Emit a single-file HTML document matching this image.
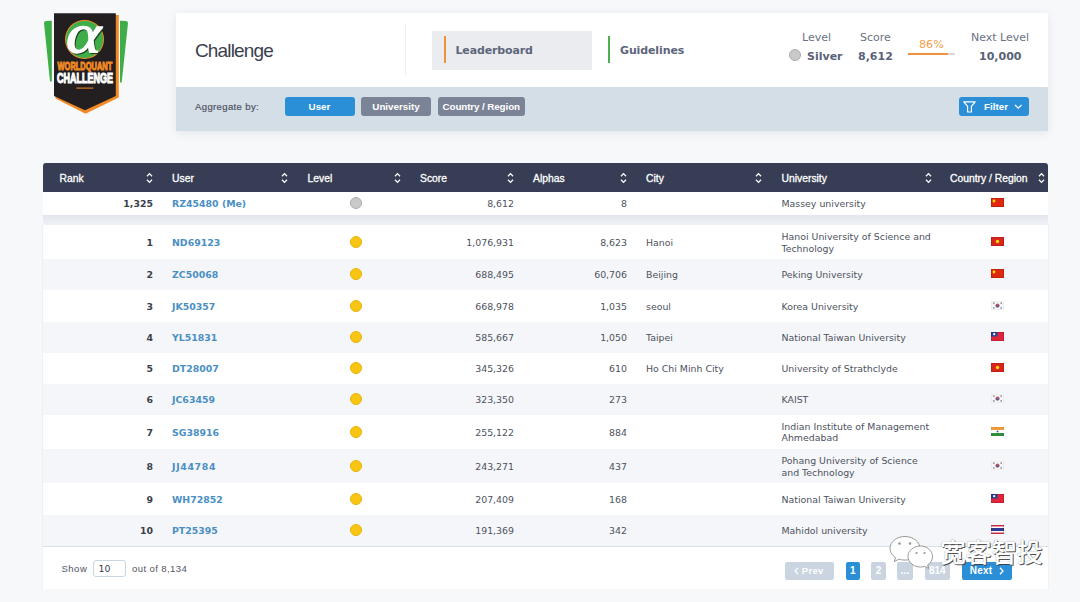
<!DOCTYPE html>
<html lang="en">
<head>
<meta charset="utf-8">
<title>WorldQuant Challenge Leaderboard</title>
<style>
*{box-sizing:border-box;margin:0;padding:0}
html,body{width:1080px;height:602px;overflow:hidden}
body{background:#f7f8fa;position:relative;font-family:"DejaVu Sans","Liberation Sans",sans-serif;color:#4a4f5c}
.abs{position:absolute;white-space:nowrap}
.din{font-family:"Liberation Sans",sans-serif}
/* header card */
#card{position:absolute;left:176px;top:13px;width:872px;height:118px;background:#fff;box-shadow:0 2px 9px rgba(60,80,110,.10)}
#cardbar{position:absolute;left:0;top:74px;width:872px;height:44px;background:#d4dee7}
#title{left:19px;top:26px;font-size:19px;letter-spacing:-.85px;color:#3a3f4d;line-height:24px}
#vdiv{position:absolute;left:229px;top:11px;width:1px;height:52px;background:#eceef1}
#tab1{position:absolute;left:256px;top:18px;width:160px;height:39px;background:#eaecf0}
.bar{position:absolute;width:2px;height:27px;top:23px}
.tabtxt{font-size:11px;font-weight:700;color:#5d667b;top:31.4px;line-height:14px}
.btn{position:absolute;height:19px;top:84px;border-radius:3px;color:#fff;font-family:"Liberation Sans",sans-serif;font-weight:700;font-size:9.800px;line-height:20.800px;text-align:center;white-space:nowrap}
.gray{background:#7b8396}
.blue{background:#2a8fd6}
.lbl{font-size:11px;color:#6a7182;line-height:14px;margin-top:1px}
.val{font-size:11px;font-weight:700;color:#5a6277;line-height:14px;margin-top:1px}
/* table */
#thead{position:absolute;left:43px;top:163px;width:1005px;height:28.5px;background:#373d54;border-radius:3px 3px 0 0}
.th{position:absolute;top:8.8px;-webkit-text-stroke:.3px #fff;font-family:"Liberation Sans",sans-serif;font-size:10.35px;color:#fff;line-height:14px;white-space:nowrap}
.sort{position:absolute;top:8.8px}
#merow{position:absolute;left:43px;top:191.5px;width:1005px;height:23.5px;background:#fff}
#gap{position:absolute;left:43px;top:215px;width:1005px;height:10px;background:linear-gradient(#e2e6ee,#eff2f6)}
#tbody{position:absolute;left:43px;top:225px;width:1005px;height:364px;background:#fff}
.row{position:absolute;left:43px;width:1005px;background:#fff;box-shadow:-1px 0 0 #eceff3,1px 0 0 #eceff3}
.row.odd{background:#f5f6f9}
.c{position:absolute;font-size:9.4px;line-height:12px;white-space:nowrap;color:#4d525e}
.rank{right:895px;font-weight:700;color:#3b3f4a;text-align:right}
.user{left:129px;font-weight:700;color:#4a8fc4}
.score{right:534px}
.alphas{right:421px}
.city{left:603px}
.uni{left:738.5px;line-height:11.8px}
.dot{position:absolute;left:307px;width:12px;height:12px;border-radius:50%;background:#f9c513;border:1px solid #e9b40a}
.flag{position:absolute;left:948px}
#foot{position:absolute;left:43px;top:545.5px;width:1005px;height:43px;background:#fff;border-top:1px solid #d5e2ee;box-shadow:-1px 0 0 #f0f2f5,1px 0 0 #f0f2f5}
.pg{position:absolute;top:562px;height:18px;border-radius:2px;color:#fff;font-family:"Liberation Sans",sans-serif;font-weight:700;font-size:10px;line-height:18px;text-align:center;white-space:nowrap}
</style>
</head>
<body>
<!-- logo -->
<svg class="abs" style="left:40px;top:8px" width="92" height="110" viewBox="40 8 92 110">
  <path d="M44 23 Q44.200 21.200 46 21 L51.800 20.800 L51.800 81.500 L50 81.500 Z" fill="#3fae49"/>
  <path d="M128 23 Q127.800 21.200 126 21 L120 20.800 L120 82.500 L121.700 82.500 Z" fill="#3fae49"/>
  <path d="M55.500 15 L118.800 15 L118.800 97.500 L85.500 113.800 L55.500 98.500 Z" fill="#f08a24"/>
  <path d="M54 13.200 L115.800 13.200 L115.800 96 L85 110.300 L54 96 Z" fill="#231f20"/>
  <circle cx="84.500" cy="39.400" r="19.500" fill="#e8902c"/>
  <circle cx="84.500" cy="39.400" r="18.500" fill="#3fae49"/>
  <g transform="translate(84.100 39.700) scale(1.34 1.1) translate(-84.3 -41)">
    <text x="84.600" y="53.100" text-anchor="middle" font-family="'Liberation Serif','DejaVu Serif',serif" font-style="italic" font-weight="400" font-size="50" fill="#1d3b1f" stroke="#1d3b1f" stroke-width="1.2">α</text>
    <text x="84" y="52.500" text-anchor="middle" font-family="'Liberation Serif','DejaVu Serif',serif" font-style="italic" font-weight="400" font-size="50" fill="#fff" stroke="#fff" stroke-width="1.2">α</text>
  </g>
  <text x="57.600" y="70.400" font-family="'Liberation Sans',sans-serif" font-weight="700" font-size="10.800" fill="#f08a24" stroke="#f08a24" stroke-width="1" textLength="54.600" lengthAdjust="spacingAndGlyphs">WORLDQUANT</text>
  <text x="57.100" y="83" font-family="'Liberation Sans',sans-serif" font-weight="700" font-size="14.600" fill="#fff" stroke="#fff" stroke-width="1.200" textLength="55.800" lengthAdjust="spacingAndGlyphs">CHALLENGE</text>
  <rect x="76.400" y="87.600" width="17" height="1" fill="#f08a24"/>
</svg>
<!-- header card -->
<div id="card">
  <div id="cardbar"></div>
  <div id="title" class="abs din">Challenge</div>
  <div id="vdiv"></div>
  <div id="tab1"></div>
  <div class="bar" style="left:268px;background:#f0923a"></div>
  <div class="abs tabtxt" style="left:279.5px;letter-spacing:-.15px">Leaderboard</div>
  <div class="bar" style="left:432px;background:#4caf50"></div>
  <div class="abs tabtxt" style="left:444px;letter-spacing:-.12px">Guidelines</div>

  <div class="abs lbl" style="left:626px;top:17px">Level</div>
  <div class="abs" style="left:613px;top:36px;width:12px;height:12px;border-radius:50%;background:#c9c9c9;border:1px solid #adadad"></div>
  <div class="abs val" style="left:631px;top:36px">Silver</div>
  <div class="abs lbl" style="left:684px;top:17px">Score</div>
  <div class="abs val" style="left:682px;top:36px">8,612</div>
  <div class="abs" style="left:743px;top:25px;font-size:11.200px;color:#f0a04b;line-height:13px">86%</div>
  <div class="abs" style="left:732px;top:40px;width:47px;height:1.500px;background:#d9d9d9"></div>
  <div class="abs" style="left:732px;top:40px;width:40px;height:1.500px;background:#f0923a"></div>
  <div class="abs lbl" style="left:795px;top:17px">Next Level</div>
  <div class="abs val" style="left:803px;top:36px">10,000</div>

  <div class="abs din" style="left:19px;top:87.900px;font-size:9.5px;letter-spacing:.38px;color:#4f5564;-webkit-text-stroke:.2px #4f5564;line-height:12px">Aggregate by:</div>
  <div class="btn blue" style="left:108.5px;width:70px">User</div>
  <div class="btn gray" style="left:185px;width:70px">University</div>
  <div class="btn gray" style="left:261.5px;width:87.5px;letter-spacing:-.1px">Country / Region</div>
  <div class="btn blue" style="left:783px;width:70px;padding-left:4px">Filter
    <svg style="position:absolute;left:54.800px;top:6.800px" width="8.500" height="6" viewBox="0 0 8.500 6"><path d="M1 1l3.250 3.200 3.250-3.200" fill="none" stroke="#fff" stroke-width="1.2"/></svg>
    <svg style="position:absolute;left:4.300px;top:3.700px" width="13" height="12" viewBox="0 0 13 12"><path d="M.8 .8h11.400L8.400 5.300V11H4.600V5.300z" fill="none" stroke="#fff" stroke-width="1.150" stroke-linejoin="round"/></svg>
  </div>
</div>

<!-- table -->
<div id="tbody"></div>
<div class="row" style="top:225px;height:33.69999999999999px"><span class="c rank" style="top:11.8px">1</span><span class="c user" style="top:11.8px">ND69123</span><i class="dot" style="top:10.8px"></i><span class="c score" style="top:11.8px">1,076,931</span><span class="c alphas" style="top:11.8px">8,623</span><span class="c city" style="top:11.8px">Hanoi</span><span class="c uni" style="top:5.8px">Hanoi University of Science and<br>Technology</span><svg class="flag" style="top:11.8px" width="13" height="9" viewBox="0 0 13 9"><rect width="13" height="9" fill="#da251d"/><circle cx="6.5" cy="4.5" r="1.7" fill="#ffdf00"/><rect x=".4" y=".4" width="12.2" height="8.2" fill="none" stroke="#000" stroke-opacity=".16" stroke-width=".8"/></svg></div>
<div class="row odd" style="top:258.7px;height:31.30000000000001px"><span class="c rank" style="top:10.6px">2</span><span class="c user" style="top:10.6px">ZC50068</span><i class="dot" style="top:9.6px"></i><span class="c score" style="top:10.6px">688,495</span><span class="c alphas" style="top:10.6px">60,706</span><span class="c city" style="top:10.6px">Beijing</span><span class="c uni" style="top:10.6px">Peking University</span><svg class="flag" style="top:10.6px" width="13" height="9" viewBox="0 0 13 9"><rect width="13" height="9" fill="#de2910"/><circle cx="3" cy="3" r="1.4" fill="#ffde00"/><rect x=".4" y=".4" width="12.2" height="8.2" fill="none" stroke="#000" stroke-opacity=".16" stroke-width=".8"/></svg></div>
<div class="row" style="top:290px;height:31.600000000000023px"><span class="c rank" style="top:10.7px">3</span><span class="c user" style="top:10.7px">JK50357</span><i class="dot" style="top:9.7px"></i><span class="c score" style="top:10.7px">668,978</span><span class="c alphas" style="top:10.7px">1,035</span><span class="c city" style="top:10.7px">seoul</span><span class="c uni" style="top:10.7px">Korea University</span><svg class="flag" style="top:10.7px" width="13" height="9" viewBox="0 0 13 9"><rect width="13" height="9" fill="#f7f7f9"/><circle cx="6.5" cy="4.5" r="2" fill="#c8506a"/><path d="M4.5 4.5a2 2 0 0 0 4 0z" fill="#50609a"/><rect x="2" y="1.5" width="1.6" height="1.2" fill="#777"/><rect x="9.4" y="1.5" width="1.6" height="1.2" fill="#777"/><rect x="2" y="6.3" width="1.6" height="1.2" fill="#777"/><rect x="9.4" y="6.3" width="1.6" height="1.2" fill="#777"/><rect x=".4" y=".4" width="12.2" height="8.2" fill="none" stroke="#000" stroke-opacity=".05" stroke-width=".8"/></svg></div>
<div class="row odd" style="top:321.6px;height:31.099999999999966px"><span class="c rank" style="top:10.4px">4</span><span class="c user" style="top:10.4px">YL51831</span><i class="dot" style="top:9.4px"></i><span class="c score" style="top:10.4px">585,667</span><span class="c alphas" style="top:10.4px">1,050</span><span class="c city" style="top:10.4px">Taipei</span><span class="c uni" style="top:10.4px">National Taiwan University</span><svg class="flag" style="top:10.4px" width="13" height="9" viewBox="0 0 13 9"><rect width="13" height="9" fill="#e0243a"/><rect width="6.5" height="4.5" fill="#2a3f9d"/><circle cx="3.2" cy="2.2" r="1.1" fill="#fff"/><rect x=".4" y=".4" width="12.2" height="8.2" fill="none" stroke="#000" stroke-opacity=".16" stroke-width=".8"/></svg></div>
<div class="row" style="top:352.7px;height:30.80000000000001px"><span class="c rank" style="top:10.3px">5</span><span class="c user" style="top:10.3px">DT28007</span><i class="dot" style="top:9.3px"></i><span class="c score" style="top:10.3px">345,326</span><span class="c alphas" style="top:10.3px">610</span><span class="c city" style="top:10.3px">Ho Chi Minh City</span><span class="c uni" style="top:10.3px">University of Strathclyde</span><svg class="flag" style="top:10.3px" width="13" height="9" viewBox="0 0 13 9"><rect width="13" height="9" fill="#da251d"/><circle cx="6.5" cy="4.5" r="1.7" fill="#ffdf00"/><rect x=".4" y=".4" width="12.2" height="8.2" fill="none" stroke="#000" stroke-opacity=".16" stroke-width=".8"/></svg></div>
<div class="row odd" style="top:383.5px;height:31.0px"><span class="c rank" style="top:10.4px">6</span><span class="c user" style="top:10.4px">JC63459</span><i class="dot" style="top:9.4px"></i><span class="c score" style="top:10.4px">323,350</span><span class="c alphas" style="top:10.4px">273</span><span class="c uni" style="top:10.4px">KAIST</span><svg class="flag" style="top:10.4px" width="13" height="9" viewBox="0 0 13 9"><rect width="13" height="9" fill="#f7f7f9"/><circle cx="6.5" cy="4.5" r="2" fill="#c8506a"/><path d="M4.5 4.5a2 2 0 0 0 4 0z" fill="#50609a"/><rect x="2" y="1.5" width="1.6" height="1.2" fill="#777"/><rect x="9.4" y="1.5" width="1.6" height="1.2" fill="#777"/><rect x="2" y="6.3" width="1.6" height="1.2" fill="#777"/><rect x="9.4" y="6.3" width="1.6" height="1.2" fill="#777"/><rect x=".4" y=".4" width="12.2" height="8.2" fill="none" stroke="#000" stroke-opacity=".05" stroke-width=".8"/></svg></div>
<div class="row" style="top:414.5px;height:34.5px"><span class="c rank" style="top:12.1px">7</span><span class="c user" style="top:12.1px">SG38916</span><i class="dot" style="top:11.1px"></i><span class="c score" style="top:12.1px">255,122</span><span class="c alphas" style="top:12.1px">884</span><span class="c uni" style="top:6.1px">Indian Institute of Management<br>Ahmedabad</span><svg class="flag" style="top:12.1px" width="13" height="9" viewBox="0 0 13 9"><rect width="13" height="9" fill="#fff"/><rect width="13" height="3" fill="#f39a3c"/><rect y="6" width="13" height="3" fill="#2f8f3a"/><circle cx="6.5" cy="4.5" r="1" fill="#4a5aa8"/><rect x=".4" y=".4" width="12.2" height="8.2" fill="none" stroke="#000" stroke-opacity=".05" stroke-width=".8"/></svg></div>
<div class="row odd" style="top:449px;height:34px"><span class="c rank" style="top:11.9px">8</span><span class="c user" style="top:11.9px;letter-spacing:.65px">JJ44784</span><i class="dot" style="top:10.9px"></i><span class="c score" style="top:11.9px">243,271</span><span class="c alphas" style="top:11.9px">437</span><span class="c uni" style="top:5.9px">Pohang University of Science<br>and Technology</span><svg class="flag" style="top:11.9px" width="13" height="9" viewBox="0 0 13 9"><rect width="13" height="9" fill="#f7f7f9"/><circle cx="6.5" cy="4.5" r="2" fill="#c8506a"/><path d="M4.5 4.5a2 2 0 0 0 4 0z" fill="#50609a"/><rect x="2" y="1.5" width="1.6" height="1.2" fill="#777"/><rect x="9.4" y="1.5" width="1.6" height="1.2" fill="#777"/><rect x="2" y="6.3" width="1.6" height="1.2" fill="#777"/><rect x="9.4" y="6.3" width="1.6" height="1.2" fill="#777"/><rect x=".4" y=".4" width="12.2" height="8.2" fill="none" stroke="#000" stroke-opacity=".05" stroke-width=".8"/></svg></div>
<div class="row" style="top:483px;height:31.5px"><span class="c rank" style="top:10.6px">9</span><span class="c user" style="top:10.6px">WH72852</span><i class="dot" style="top:9.6px"></i><span class="c score" style="top:10.6px">207,409</span><span class="c alphas" style="top:10.6px">168</span><span class="c uni" style="top:10.6px">National Taiwan University</span><svg class="flag" style="top:10.6px" width="13" height="9" viewBox="0 0 13 9"><rect width="13" height="9" fill="#e0243a"/><rect width="6.5" height="4.5" fill="#2a3f9d"/><circle cx="3.2" cy="2.2" r="1.1" fill="#fff"/><rect x=".4" y=".4" width="12.2" height="8.2" fill="none" stroke="#000" stroke-opacity=".16" stroke-width=".8"/></svg></div>
<div class="row odd" style="top:514.5px;height:31.0px"><span class="c rank" style="top:10.4px">10</span><span class="c user" style="top:10.4px">PT25395</span><i class="dot" style="top:9.4px"></i><span class="c score" style="top:10.4px">191,369</span><span class="c alphas" style="top:10.4px">342</span><span class="c uni" style="top:10.4px">Mahidol university</span><svg class="flag" style="top:10.4px" width="13" height="9" viewBox="0 0 13 9"><rect width="13" height="9" fill="#d8334a"/><rect y="1.5" width="13" height="6" fill="#fff"/><rect y="3" width="13" height="3" fill="#2d3a8c"/><rect x=".4" y=".4" width="12.2" height="8.2" fill="none" stroke="#000" stroke-opacity=".16" stroke-width=".8"/></svg></div>
<div id="gap"></div>
<div id="merow">
  <span class="c rank" style="top:6px">1,325</span>
  <span class="c user" style="top:6px">RZ45480 (Me)</span>
  <i class="dot" style="top:5.6px;background:#c9c9c9;border-color:#adadad"></i>
  <span class="c score" style="top:6px">8,612</span>
  <span class="c alphas" style="top:6px">8</span>
  <span class="c uni" style="top:6px">Massey university</span>
  <svg class="flag" style="top:6.5px" width="13" height="9" viewBox="0 0 13 9"><rect width="13" height="9" fill="#de2910"/><circle cx="3" cy="3" r="1.4" fill="#ffde00"/><rect x=".4" y=".4" width="12.2" height="8.2" fill="none" stroke="#000" stroke-opacity=".16" stroke-width=".8"/></svg>
</div>
<div id="thead">
  <span class="th" style="left:16.5px">Rank</span>
  <span class="th" style="left:129px">User</span>
  <span class="th" style="left:264.5px">Level</span>
  <span class="th" style="left:377px">Score</span>
  <span class="th" style="left:490px">Alphas</span>
  <span class="th" style="left:603px">City</span>
  <span class="th" style="left:738.5px">University</span>
  <span class="th" style="left:907px">Country / Region</span>
<svg class="sort" style="left:102.9px" width="7" height="12" viewBox="0 0 7 12"><path d="M1 4.2L3.5 1.6 6 4.2M1 7.8L3.5 10.4 6 7.8" fill="none" stroke="#fff" stroke-width="1.300"/></svg><svg class="sort" style="left:237.6px" width="7" height="12" viewBox="0 0 7 12"><path d="M1 4.2L3.5 1.6 6 4.2M1 7.8L3.5 10.4 6 7.8" fill="none" stroke="#fff" stroke-width="1.300"/></svg><svg class="sort" style="left:351.2px" width="7" height="12" viewBox="0 0 7 12"><path d="M1 4.2L3.5 1.6 6 4.2M1 7.8L3.5 10.4 6 7.8" fill="none" stroke="#fff" stroke-width="1.300"/></svg><svg class="sort" style="left:464.4px" width="7" height="12" viewBox="0 0 7 12"><path d="M1 4.2L3.5 1.6 6 4.2M1 7.8L3.5 10.4 6 7.8" fill="none" stroke="#fff" stroke-width="1.300"/></svg><svg class="sort" style="left:577.3px" width="7" height="12" viewBox="0 0 7 12"><path d="M1 4.2L3.5 1.6 6 4.2M1 7.8L3.5 10.4 6 7.8" fill="none" stroke="#fff" stroke-width="1.300"/></svg><svg class="sort" style="left:712.0px" width="7" height="12" viewBox="0 0 7 12"><path d="M1 4.2L3.5 1.6 6 4.2M1 7.8L3.5 10.4 6 7.8" fill="none" stroke="#fff" stroke-width="1.300"/></svg><svg class="sort" style="left:881.6px" width="7" height="12" viewBox="0 0 7 12"><path d="M1 4.2L3.5 1.6 6 4.2M1 7.8L3.5 10.4 6 7.8" fill="none" stroke="#fff" stroke-width="1.300"/></svg><svg class="sort" style="left:994.7px" width="7" height="12" viewBox="0 0 7 12"><path d="M1 4.2L3.5 1.6 6 4.2M1 7.8L3.5 10.4 6 7.8" fill="none" stroke="#fff" stroke-width="1.300"/></svg>
</div>
<div id="foot"></div>
<div class="abs din" style="left:61.5px;top:563px;font-size:9.5px;letter-spacing:.5px;color:#4f5564;line-height:12px">Show</div>
<div class="abs" style="left:93px;top:560px;width:33px;height:17px;border:1px solid #c9d6e2;border-radius:3px;background:#fff;font-size:9.4px;line-height:16.5px;padding-left:4.5px;color:#3b3f4a">10</div>
<div class="abs din" style="left:132px;top:563px;font-size:9.5px;letter-spacing:.42px;color:#4f5564;line-height:12px">out of 8,134</div>

<div class="pg" style="left:784.5px;width:49.5px;background:#cad5e1;font-size:9.5px;letter-spacing:.3px;padding-left:7px">Prev<svg style="position:absolute;left:9.500px;top:5px" width="5" height="8" viewBox="0 0 5 8"><path d="M4 .8L1 4l3 3.200" fill="none" stroke="#fff" stroke-width="1.2"/></svg></div>
<div class="pg" style="left:845.5px;width:14.5px;background:#2a8fd6">1</div>
<div class="pg" style="left:871px;width:15px;background:#c9d4e0">2</div>
<div class="pg" style="left:897px;width:16px;background:#c9d4e0">...</div>
<div class="pg" style="left:924.5px;width:25.5px;background:#c9d4e0">814</div>
<div class="pg" style="left:961.5px;width:50px;background:#2a8fd6;letter-spacing:.2px;padding-right:11px">Next<svg style="position:absolute;left:37px;top:5px" width="5" height="8" viewBox="0 0 5 8"><path d="M1 .8L4 4 1 7.200" fill="none" stroke="#fff" stroke-width="1.300"/></svg></div>
<!-- watermark -->
<svg class="abs" style="left:886px;top:532px" width="52" height="42" viewBox="886 532 52 42">
  <g fill="#fff" stroke="#8a8a8a" stroke-width=".9" opacity=".95">
    <path d="M905 536.5c-8.3 0-15 5.3-15 11.9 0 3.7 2.1 7 5.5 9.200l-1.300 4 4.600-2.400c1.900.6 4 .9 6.200.9 8.300 0 15-5.300 15-11.700S913.300 536.500 905 536.500z"/>
    <path d="M920.500 546c-6.900 0-12.500 4.700-12.500 10.500s5.600 10.500 12.500 10.500c1.500 0 3-.2 4.300-.6l3.900 2.100-1.100-3.500c3-1.900 4.900-4.900 4.900-8.500 0-5.800-5.600-10.500-12-10.500z"/>
  </g>
  <g fill="#999"><circle cx="899.500" cy="543.500" r="1.300"/><circle cx="910" cy="543.500" r="1.300"/><circle cx="916.500" cy="553" r="1.100"/><circle cx="924.500" cy="553" r="1.100"/></g>
</svg>
<div class="abs" style="left:940px;top:536px;font-family:'Liberation Sans','Noto Sans CJK SC',sans-serif;font-size:26px;font-weight:500;line-height:34px;color:#fff;text-shadow:1px 1px 0 rgba(60,60,60,.9),0 0 1px rgba(80,80,80,.7);letter-spacing:-.4px">宽客智投</div>
</body>
</html>
